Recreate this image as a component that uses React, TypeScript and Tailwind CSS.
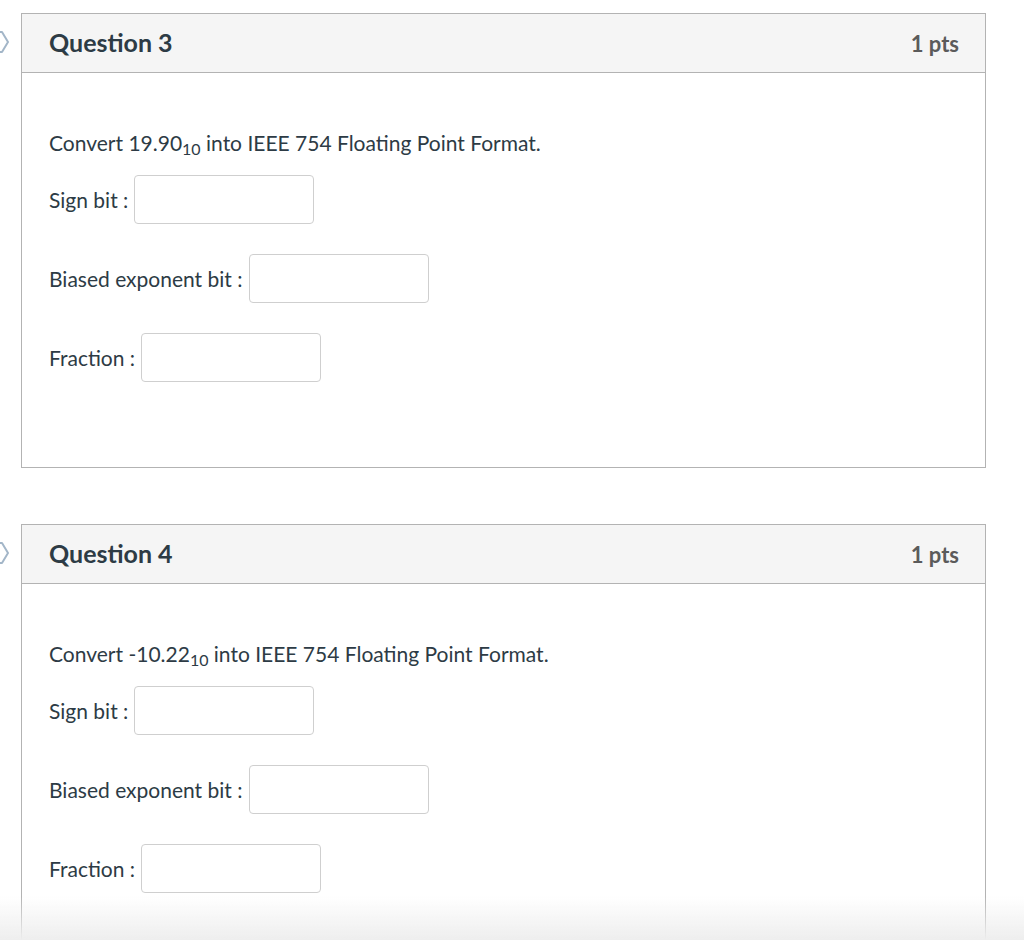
import React from 'react';

interface Field {
    label: string;
}

interface QuestionProps {
    number: number;
    value: string;
    fields: Field[];
}

// flag marker sticking out on the left, mostly cut off by the viewport
const FlagMarker: React.FC = () => (
    <svg
        className="absolute left-[-33px] top-[16px] h-[26px] w-[24px]"
        viewBox="0 0 24 26"
        fill="none"
    >
        <path d="M0 3 H14 L20 13 L14 23 H0" stroke="#a3b6c8" strokeWidth="2" strokeLinejoin="round" />
    </svg>
);

const Question: React.FC<QuestionProps> = ({ number, value, fields }) => (
    <div className="relative">
        <FlagMarker />
        <div className="border border-[#b3b3b3] bg-white">
            {/* header */}
            <div className="flex h-[59px] items-center justify-between border-b border-[#b3b3b3] bg-[#f5f5f5] pl-[27px] pr-[26px]">
                <h2 className="text-[25px] font-bold text-[#2d3b45]">Question {number}</h2>
                <span className="text-[22px] font-bold text-[#5b5b5b]">1 pts</span>
            </div>
            {/* body */}
            <div className="px-[27px] pt-[56px] pb-[85px] text-[21px] text-[#2d3b45]">
                <p className="leading-[28px]">
                    Convert {value}
                    <sub className="text-[16px]">10</sub> into IEEE 754 Floating Point Format.
                </p>
                <div className="mt-[18px] flex flex-col gap-[30px]">
                    {fields.map((f) => (
                        <div key={f.label} className="flex items-center leading-[28px]">
                            <span>{f.label} :</span>
                            <input
                                type="text"
                                className="ml-[6px] h-[49px] w-[180px] rounded-[4px] border border-[#cfcfcf] bg-white"
                            />
                        </div>
                    ))}
                </div>
            </div>
        </div>
    </div>
);

const fields: Field[] = [
    { label: 'Sign bit' },
    { label: 'Biased exponent bit' },
    { label: 'Fraction' },
];

export default function App() {
    return (
        <div className="min-h-[940px] bg-white pl-[21px] pr-[38px] pt-[13px] font-['Lato',sans-serif]">
            <div className="flex w-[965px] flex-col gap-[56px]">
                <Question number={3} value="19.90" fields={fields} />
                <Question number={4} value="-10.22" fields={fields} />
            </div>
            {/* fade at the bottom of the viewport */}
            <div className="pointer-events-none fixed bottom-0 left-0 h-[44px] w-full bg-gradient-to-b from-white/0 to-[#eeeeee]" />
        </div>
    );
}
